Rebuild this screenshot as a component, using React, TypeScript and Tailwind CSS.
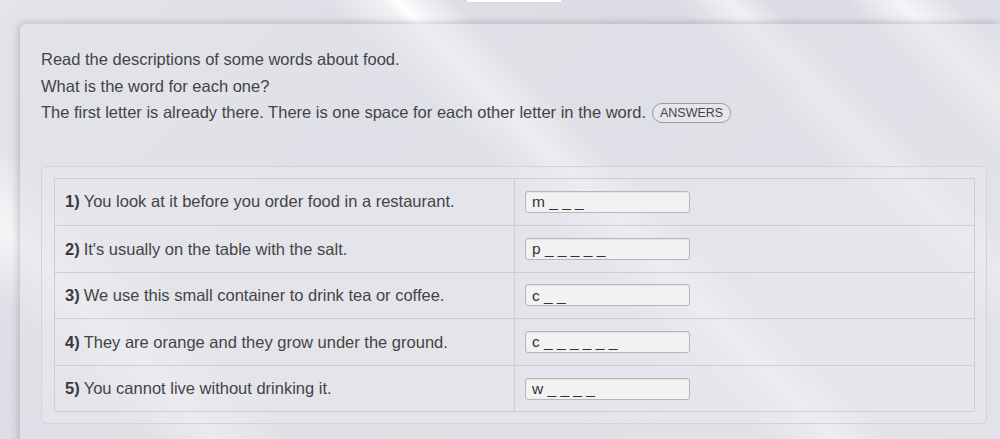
import React from "react";

const items = [
  { n: "1)", text: "You look at it before you order food in a restaurant.", hint: "m _ _ _" },
  { n: "2)", text: "It's usually on the table with the salt.", hint: "p _ _ _ _ _" },
  { n: "3)", text: "We use this small container to drink tea or coffee.", hint: "c _ _" },
  { n: "4)", text: "They are orange and they grow under the ground.", hint: "c _ _ _ _ _ _" },
  { n: "5)", text: "You cannot live without drinking it.", hint: "w _ _ _ _" },
];

export default function App() {
  return (
    <div className="w-[1000px] h-[439px] overflow-hidden bg-[linear-gradient(45deg,transparent_10%,rgba(255,255,255,0.7)_15%,transparent_21%,transparent_53%,rgba(255,255,255,0.6)_57%,rgba(255,255,255,0.95)_58%,transparent_62%,transparent_77%,rgba(255,255,255,0.6)_81%,transparent_84%,transparent_89%,rgba(255,255,255,0.7)_93%,transparent_97%),linear-gradient(135deg,#e4e5ea,#d9dae3_50%,#e3e4ea)] font-['Liberation_Sans',Arial,sans-serif] text-[#444]">
      <div className="h-[24px]">
        <div className="ml-[466px] w-[96px] h-[3px] bg-white border border-t-0 border-[#d8d8de]" />
      </div>

      <div className="ml-[20px] h-[430px] rounded-tl-[6px] bg-[#e2e3ea]/60 shadow-[-3px_0_8px_rgba(0,0,0,0.12),0_-2px_6px_rgba(0,0,0,0.08)] pt-[22px] pl-[21px]">
        <p className="text-[16.5px] leading-[26.5px]">Read the descriptions of some words about food.</p>
        <p className="text-[16.5px] leading-[26.5px]">What is the word for each one?</p>
        <p className="text-[16.5px] leading-[26.5px]">
          The first letter is already there. There is one space for each other letter in the word.
          <span className="ml-[6px] inline-flex items-center h-[20px] px-[7px] rounded-full border border-[#9a9aa0] text-[12.5px] leading-none text-[#444] align-[1px] bg-white/20">
            ANSWERS
          </span>
        </p>

        <div className="mt-[40px] w-[946px] rounded-[6px] border border-[#d2d3da] bg-[#eaebf0]/40 px-[12px] py-[11px]">
          <div className="w-[921px] border border-[#cdced4]">
            {items.map((it, i) => (
              <div
                key={it.n}
                className={`flex h-[46.6px] ${i > 0 ? "border-t border-[#cdced4]" : ""}`}
              >
                <div className="w-[460px] flex items-center pl-[10px] border-r border-[#cdced4] text-[16.5px]">
                  <b className="text-[#3a3a3a] mr-[4px]">{it.n}</b>
                  <span>{it.text}</span>
                </div>
                <div className="flex-1 flex items-center pl-[10px]">
                  <div className="w-[165px] h-[22px] rounded-[3px] border border-[#bdb5b5] bg-[#f2f2f2] pl-[6px] flex items-center text-[15.5px] text-[#333] shadow-[inset_0_1px_1px_rgba(0,0,0,0.06)]">
                    {it.hint}
                  </div>
                </div>
              </div>
            ))}
          </div>
        </div>
      </div>
    </div>
  );
}
